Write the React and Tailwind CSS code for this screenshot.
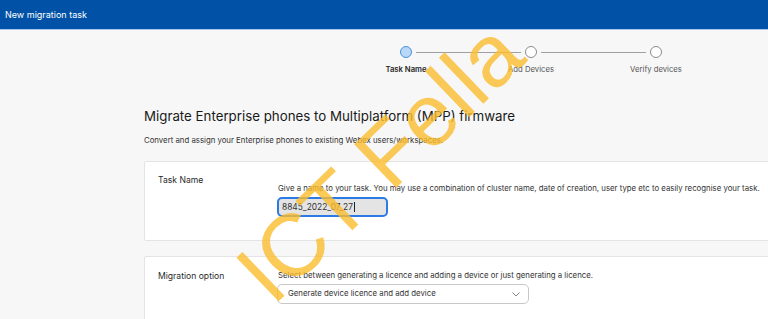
import React from "react";

function Step({ label, active }) {
  return (
    <div className="relative w-[12px] h-[12px] shrink-0">
      <div
        className={
          active
            ? "w-[12px] h-[12px] rounded-full border border-[#4a90e2] bg-[#b9d8f8]"
            : "w-[12px] h-[12px] rounded-full border border-[#8c8c8c] bg-white"
        }
      />
      <div
        className={
          "absolute left-1/2 -translate-x-1/2 top-[19px] whitespace-nowrap text-[7.7px] leading-[10px] " +
          (active ? "font-semibold text-[#262626]" : "text-[#555]")
        }
      >
        {label}
      </div>
    </div>
  );
}

export default function App() {
  return (
    <div
      className="relative w-[768px] h-[319px] overflow-hidden bg-[#f7f7f7] text-[#1f1f1f]"
      style={{ fontFamily: "Inter, 'Liberation Sans', sans-serif" }}
    >
      <div className="h-[30px] bg-[#0152a6] border-b border-[#a9c6ea] flex items-center px-[5px]">
        <span className="text-white text-[9px] leading-[12px]">New migration task</span>
      </div>

      <div className="flex items-center gap-[4px] pl-[400px] pt-[16px]">
        <Step label="Task Name" active />
        <div className="w-[105px] h-px bg-[#a0a0a0]" />
        <Step label="Add Devices" />
        <div className="w-[105px] h-px bg-[#a0a0a0]" />
        <Step label="Verify devices" />
      </div>

      <div className="pl-[144px] pt-[50px]">
        <h1 className="text-[13.3px] leading-[16px] text-[#1a1a1a]">
          Migrate Enterprise phones to Multiplatform (MPP) firmware
        </h1>
        <p className="text-[7.8px] leading-[10px] mt-[11px] text-[#333]">
          Convert and assign your Enterprise phones to existing Webex users/workspaces.
        </p>
      </div>

      <div className="ml-[144px] mt-[16px] w-[640px] h-[80px] bg-white border border-[#e4e4e4] rounded-[2px] flex">
        <div className="w-[132px] shrink-0 pl-[13px] pt-[13px] text-[8.6px] leading-[11px] text-[#2a2a2a]">
          Task Name
        </div>
        <div className="pt-[21px] shrink-0">
          <div className="pl-px text-[7.8px] leading-[10px] text-[#333] whitespace-nowrap">
            Give a name to your task. You may use a combination of cluster name, date of creation, user type etc to easily recognise your task.
          </div>
          <div className="mt-[4px] w-[111px] h-[20px] rounded-[5px] border-2 border-[#2c7be5] bg-[#e4e4e4] flex items-center pl-[3px] text-[8.4px] text-[#333]">
            8845_2022_07_27<span className="ml-px w-px h-[10px] bg-[#222]" />
          </div>
        </div>
      </div>

      <div className="ml-[144px] mt-[15px] w-[640px] h-[80px] bg-white border border-[#e4e4e4] rounded-[2px] flex">
        <div className="w-[132px] shrink-0 pl-[13px] pt-[14px] text-[8.6px] leading-[11px] text-[#2a2a2a]">
          Migration option
        </div>
        <div className="pt-[13px] shrink-0">
          <div className="pl-px text-[7.8px] leading-[10px] text-[#333] whitespace-nowrap">
            Select between generating a licence and adding a device or just generating a licence.
          </div>
          <div className="mt-[4px] w-[252px] h-[20px] rounded-[5px] border border-[#c8c8c8] bg-white flex items-center justify-between pl-[10px] pr-[8px] text-[7.8px] text-[#333]">
            <span>Generate device licence and add device</span>
            <svg width="8" height="5" viewBox="0 0 8 5" fill="none">
              <path d="M0.5 0.5l3.5 3.5 3.5-3.5" stroke="#777" strokeWidth="0.9" />
            </svg>
          </div>
        </div>
      </div>

      <div
        className="absolute left-[202px] top-[118px] text-[88px] leading-none text-[#fbbd2e] opacity-80 whitespace-nowrap pointer-events-none origin-center rotate-[-44deg]"
        style={{ fontFamily: "'Liberation Sans', sans-serif" }}
      >
        ICT Fella
      </div>
    </div>
  );
}
